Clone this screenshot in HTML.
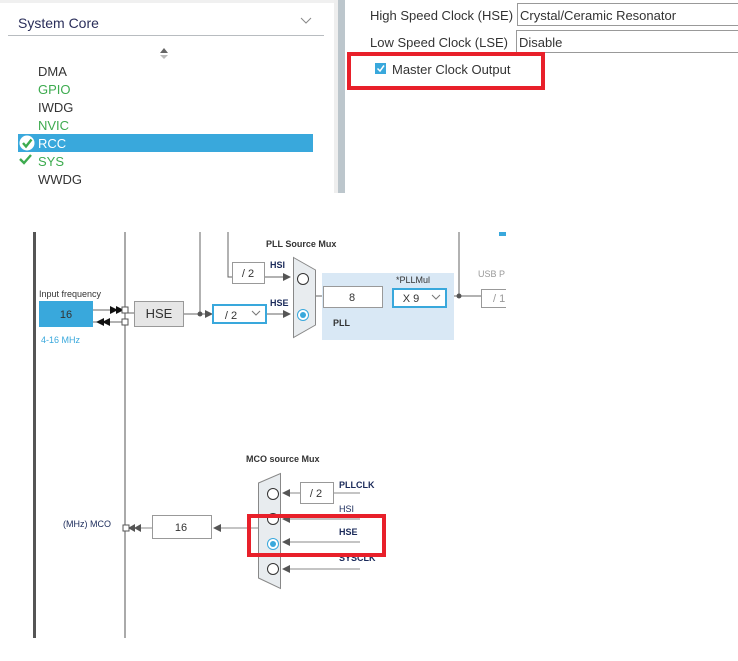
<!DOCTYPE html>
<html><head><style>
html,body{margin:0;padding:0;background:#fff;}
svg{display:block;font-family:"Liberation Sans",Arial,sans-serif;}
</style></head><body>
<svg width="738" height="661" viewBox="0 0 738 661" xmlns="http://www.w3.org/2000/svg">
<defs>
<marker id="ar" markerWidth="8" markerHeight="8" refX="7" refY="4" orient="auto" markerUnits="userSpaceOnUse"><path d="M0,0 L8,4 L0,8 Z" fill="#555"/></marker>
</defs>
<rect width="738" height="661" fill="#fff"/>
<!-- top left panel -->
<rect x="0" y="0" width="334" height="3" fill="#f0f0f0"/>
<rect x="334" y="0" width="4" height="193" fill="#eeeeee"/>
<rect x="338" y="0" width="7" height="193" fill="#bcc6cc"/>
<text x="18" y="28" font-size="14" fill="#2a2e5a">System Core</text>
<path d="M301,18 L306,23 L311,18" fill="none" stroke="#888" stroke-width="1"/>
<rect x="8" y="35" width="316" height="1" fill="#b8bcc0"/>
<path d="M160,53 L164,48 L168,53 Z" fill="#666"/>
<path d="M160,55 L164,59 L168,55 Z" fill="#bbb"/>
<g font-size="13">
<text x="38" y="76" fill="#333">DMA</text>
<text x="38" y="94" fill="#3dab4f">GPIO</text>
<text x="38" y="112" fill="#333">IWDG</text>
<text x="38" y="130" fill="#3dab4f">NVIC</text>
<rect x="18" y="134" width="295" height="18" fill="#39a8dc"/>
<circle cx="27" cy="143" r="7.5" fill="#fff"/>
<path d="M23,143 L26,146.5 L31.5,139.5" fill="none" stroke="#3dab4f" stroke-width="2.4"/>
<text x="38" y="148" fill="#fff">RCC</text>
<path d="M20,159 L24,163 L31,155" fill="none" stroke="#3dab4f" stroke-width="2.4"/>
<text x="38" y="166" fill="#3dab4f">SYS</text>
<text x="38" y="184" fill="#333">WWDG</text>
</g>
<!-- right panel -->
<g font-size="13" fill="#333">
<text x="370" y="20">High Speed Clock (HSE)</text>
<rect x="517.5" y="3.5" width="230" height="22" fill="#fff" stroke="#999"/>
<text x="520" y="20">Crystal/Ceramic Resonator</text>
<text x="370" y="47">Low Speed Clock (LSE)</text>
<rect x="516.5" y="30.5" width="230" height="22" fill="#fff" stroke="#999"/>
<text x="519" y="47">Disable</text>
<rect x="375" y="63" width="11" height="11" fill="#39a8dc"/>
<path d="M377.5,68.5 L380,71 L384,65.5" fill="none" stroke="#fff" stroke-width="1.5"/>
<text x="392" y="74">Master Clock Output</text>
</g>
<rect x="349" y="54" width="194" height="34" fill="none" stroke="#e8202a" stroke-width="4"/>

<!-- diagram -->
<rect x="33" y="232" width="3" height="406" fill="#555"/>
<rect x="124.5" y="232" width="1" height="406" fill="#555"/>
<g stroke="#666" stroke-width="1" fill="none">
<path d="M200,232 V314"/>
<path d="M228,232 V277 H232"/>
<path d="M264,277 H290" marker-end="url(#ar)"/>
<path d="M266,314 H290" marker-end="url(#ar)"/>
<path d="M183,314 H212" marker-end="url(#ar)"/>
<path d="M315,296 H323"/>
<path d="M382,296 H393"/>
<path d="M446,296 H481"/>
<path d="M459,232 V296"/>
<path d="M93,310 H124"/>
<path d="M124,322 H93"/>
<path d="M126,313 H134"/>
</g>
<path d="M110,306 L118,310 L110,314 Z M116,306 L124,310 L116,314 Z" fill="#111"/>
<path d="M102,322 L110,318 L110,326 Z M96,322 L104,318 L104,326 Z" fill="#111"/>
<rect x="122" y="307" width="6" height="6" fill="#fff" stroke="#555"/>
<rect x="122" y="319" width="6" height="6" fill="#fff" stroke="#555"/>
<circle cx="200" cy="314" r="2.5" fill="#555"/>
<circle cx="459" cy="296" r="2.5" fill="#555"/>
<text x="39" y="297" font-size="9" fill="#333">Input frequency</text>
<rect x="39" y="301" width="54" height="26" fill="#39a8dc"/>
<text x="66" y="318" font-size="11" fill="#333" text-anchor="middle">16</text>
<text x="41" y="343" font-size="9" fill="#39a8dc">4-16 MHz</text>
<rect x="134.5" y="301.5" width="49" height="25" fill="#e6e6e6" stroke="#999"/>
<text x="159" y="318" font-size="13" fill="#333" text-anchor="middle">HSE</text>
<rect x="213" y="305" width="53" height="18" fill="#fff" stroke="#39a8dc" stroke-width="2"/>
<text x="231" y="319" font-size="11" fill="#333" text-anchor="middle">/ 2</text>
<path d="M252,311 L256,315 L260,311" fill="none" stroke="#777"/>
<rect x="232.5" y="262.5" width="32" height="21" fill="#fff" stroke="#999"/>
<text x="248" y="277" font-size="11" fill="#333" text-anchor="middle">/ 2</text>
<text x="270" y="268" font-size="9" fill="#1a2a5a" font-weight="bold">HSI</text>
<text x="270" y="306" font-size="9" fill="#1a2a5a" font-weight="bold">HSE</text>
<text x="266" y="247" font-size="9" fill="#333" font-weight="bold">PLL Source Mux</text>
<path d="M293.5,257.5 L315.5,270 L315.5,325 L293.5,337.5 Z" fill="#e8ecef" stroke="#888"/>
<circle cx="303" cy="279" r="5.5" fill="#fff" stroke="#333"/>
<circle cx="303" cy="315" r="5.5" fill="#fff" stroke="#39a8dc"/>
<circle cx="303" cy="315" r="3" fill="#39a8dc"/>
<rect x="322" y="273" width="132" height="67" fill="#d9e8f5"/>
<rect x="323.5" y="286.5" width="59" height="21" fill="#fff" stroke="#999"/>
<text x="352" y="301" font-size="11" fill="#333" text-anchor="middle">8</text>
<text x="333" y="326" font-size="9" fill="#333" font-weight="bold">PLL</text>
<text x="396" y="283" font-size="9" fill="#333">*PLLMul</text>
<rect x="393" y="289" width="53" height="18" fill="#fff" stroke="#39a8dc" stroke-width="2"/>
<text x="411" y="302" font-size="11" fill="#333" text-anchor="middle">X 9</text>
<path d="M432,295 L436,299 L440,295" fill="none" stroke="#777"/>
<text x="478" y="277" font-size="9" fill="#999">USB P</text>
<rect x="481.5" y="289.5" width="30" height="18" fill="#fff" stroke="#999"/>
<text x="493" y="302" font-size="11" fill="#999">/ 1</text>
<rect x="499" y="232" width="7" height="4" fill="#39a8dc"/>
<rect x="506" y="230" width="232" height="90" fill="#fff"/>

<!-- MCO -->
<text x="246" y="462" font-size="9" fill="#333" font-weight="bold">MCO source Mux</text>
<path d="M258.5,483 L280.5,473.5 L280.5,588.5 L258.5,578 Z" fill="#e8ecef" stroke="#888"/>
<circle cx="273" cy="494" r="5.5" fill="#fff" stroke="#333"/>
<circle cx="273" cy="519" r="5.5" fill="#fff" stroke="#333"/>
<circle cx="273" cy="544" r="5.5" fill="#fff" stroke="#39a8dc"/>
<circle cx="273" cy="544" r="3" fill="#39a8dc"/>
<circle cx="273" cy="569" r="5.5" fill="#fff" stroke="#333"/>
<g stroke="#888" stroke-width="1" fill="none">
<path d="M300,493 H283" marker-end="url(#ar)"/>
<path d="M333,493 H360"/>
<path d="M360,519 H283" marker-end="url(#ar)"/>
<path d="M360,542 H283" marker-end="url(#ar)"/>
<path d="M360,569 H283" marker-end="url(#ar)"/>
<path d="M258,528 H214" marker-end="url(#ar)"/>
<path d="M152,528 H141"/>
</g>
<rect x="300.5" y="482.5" width="33" height="21" fill="#fff" stroke="#999"/>
<text x="316" y="497" font-size="11" fill="#333" text-anchor="middle">/ 2</text>
<text x="339" y="488" font-size="9" fill="#1a2a5a" font-weight="bold">PLLCLK</text>
<text x="339" y="512" font-size="9" fill="#1a2a5a">HSI</text>
<text x="339" y="535" font-size="9" fill="#1a2a5a" font-weight="bold">HSE</text>
<text x="339" y="561" font-size="9" fill="#1a2a5a" font-weight="bold">SYSCLK</text>
<rect x="152.5" y="515.5" width="59" height="23" fill="#fff" stroke="#999"/>
<text x="181" y="531" font-size="11" fill="#333" text-anchor="middle">16</text>
<path d="M128,528 L135,524 L135,532 Z M134,528 L141,524 L141,532 Z" fill="#555"/>
<rect x="123" y="525" width="6" height="6" fill="#fff" stroke="#555"/>
<text x="63" y="527" font-size="9" fill="#1a2a5a">(MHz) MCO</text>
<rect x="249" y="516" width="135" height="39" fill="none" stroke="#e8202a" stroke-width="4"/>
</svg>
</body></html>
